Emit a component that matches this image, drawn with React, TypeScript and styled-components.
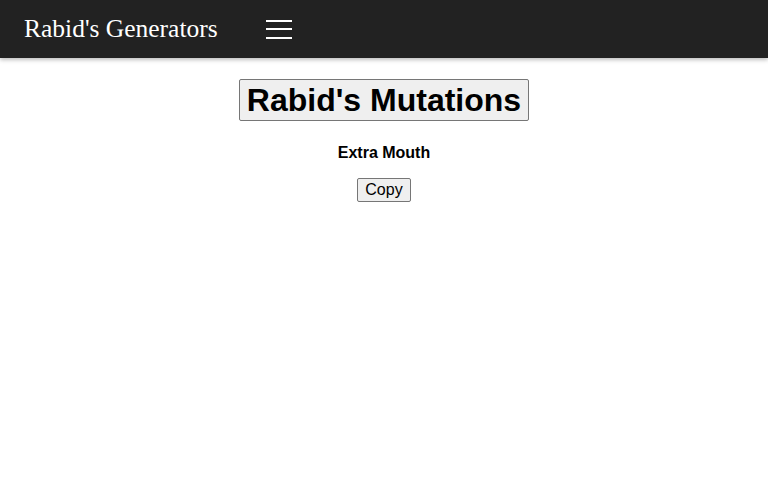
import React from 'react'
import styled, { createGlobalStyle } from 'styled-components'

const GlobalStyle = createGlobalStyle`
  body {
    margin: 0;
    background: #ffffff;
    font-family: "Liberation Sans", Arial, sans-serif;
  }
`

const NavBar = styled.nav`
  height: 58px;
  background: #222222;
  display: flex;
  align-items: center;
  padding: 0 24px;
  box-shadow: 0 2px 4px rgba(0, 0, 0, 0.25);
`

const Brand = styled.a`
  font-family: "Liberation Serif", "Times New Roman", serif;
  font-size: 25.5px;
  color: #ffffff;
  text-decoration: none;
  margin-right: 48px;
`

const Burger = styled.button`
  width: 26px;
  height: 19px;
  padding: 0;
  border: none;
  background: transparent;
  display: flex;
  flex-direction: column;
  justify-content: space-between;
  cursor: pointer;

  span {
    display: block;
    height: 2px;
    background: #ffffff;
  }
`

const Main = styled.main`
  display: flex;
  flex-direction: column;
  align-items: center;
  padding-top: 21px;
`

const TitleButton = styled.button`
  font-family: "Liberation Sans", Arial, sans-serif;
  font-size: 32px;
  font-weight: bold;
  color: #000000;
  background: #efefef;
  border: 1px solid #767676;
  border-radius: 2px;
  padding: 1px 7px;
  line-height: 38px;
`

const Mutation = styled.p`
  font-size: 16px;
  font-weight: bold;
  margin: 23px 0 16px;
`

const CopyButton = styled.button`
  font-family: "Liberation Sans", Arial, sans-serif;
  font-size: 16px;
  color: #000000;
  background: #efefef;
  border: 1px solid #767676;
  border-radius: 2px;
  padding: 2px 7px;
`

const App = () => (
  <>
    <GlobalStyle />
    <NavBar>
      <Brand href="#">Rabid's Generators</Brand>
      <Burger aria-label="Menu">
        <span />
        <span />
        <span />
      </Burger>
    </NavBar>
    <Main>
      <TitleButton>Rabid's Mutations</TitleButton>
      <Mutation>Extra Mouth</Mutation>
      <CopyButton>Copy</CopyButton>
    </Main>
  </>
)

export default App
